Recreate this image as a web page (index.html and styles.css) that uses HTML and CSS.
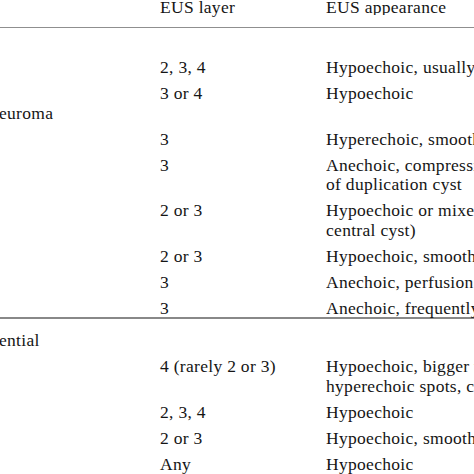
FILE: index.html
```html
<!DOCTYPE html>
<html>
<head>
<meta charset="utf-8">
<link rel="stylesheet" href="styles.css">
</head>
<body>
<div class="tbl">
  <div class="row head"><div class="c1"></div><div class="c2">EUS layer</div><div class="c3">EUS appearance</div></div>
  <div class="rule rule-top"></div>
  <div class="row"><div class="c1">&nbsp;</div><div class="c2"></div><div class="c3"></div></div>
  <div class="row"><div class="c1"></div><div class="c2">2, 3, 4</div><div class="c3">Hypoechoic, usually homogeneous</div></div>
  <div class="row"><div class="c1">&nbsp;<br>euroma</div><div class="c2">3 or 4</div><div class="c3">Hypoechoic</div></div>
  <div class="row"><div class="c1"></div><div class="c2">3</div><div class="c3">Hyperechoic, smooth margins</div></div>
  <div class="row"><div class="c1"></div><div class="c2">3</div><div class="c3">Anechoic, compressible, three to five layers<br>of duplication cyst</div></div>
  <div class="row"><div class="c1"></div><div class="c2">2 or 3</div><div class="c3">Hypoechoic or mixed (may have<br>central cyst)</div></div>
  <div class="row"><div class="c1"></div><div class="c2">2 or 3</div><div class="c3">Hypoechoic, smooth margins</div></div>
  <div class="row"><div class="c1"></div><div class="c2">3</div><div class="c3">Anechoic, perfusion at Doppler</div></div>
  <div class="row last"><div class="c1"></div><div class="c2">3</div><div class="c3">Anechoic, frequently lobulated</div></div>
  <div class="rule rule-mid"></div>
  <div class="row section"><div class="c1">ential</div><div class="c2"></div><div class="c3"></div></div>
  <div class="row"><div class="c1"></div><div class="c2">4 (rarely 2 or 3)</div><div class="c3">Hypoechoic, bigger than 3 cm,<br>hyperechoic spots, cystic areas</div></div>
  <div class="row"><div class="c1"></div><div class="c2">2, 3, 4</div><div class="c3">Hypoechoic</div></div>
  <div class="row"><div class="c1"></div><div class="c2">2 or 3</div><div class="c3">Hypoechoic, smooth margins</div></div>
  <div class="row"><div class="c1"></div><div class="c2">Any</div><div class="c3">Hypoechoic</div></div>
</div>
</body>
</html>
```
FILE: styles.css
```css
html, body {
  margin: 0;
  padding: 0;
  background: #ffffff;
}
body {
  width: 474px;
  height: 474px;
  overflow: hidden;
  font-family: "Liberation Serif", "Times New Roman", serif;
  font-size: 17.5px;
  line-height: 19.5px;
  letter-spacing: 0.3px;
  color: #151515;
}
.tbl {
  width: 474px;
}
.row {
  display: grid;
  grid-template-columns: 160px 166px 148px;
  padding: 3.25px 0;
}
.row.head {
  padding: 0;
  line-height: 15px;
}
.c1 {
  margin-left: -1px;
  white-space: nowrap;
}
.c2 {
  white-space: nowrap;
}
.c3 {
  white-space: nowrap;
  overflow: hidden;
}
.rule {
  height: 1px;
  background: #8f8f8f;
}
.rule-top {
  margin-top: 11.5px;
  margin-bottom: 1.5px;
}
.row.last {
  padding-bottom: 0;
}
.rule-mid {
  margin-top: -1px;
  height: 1.5px;
  margin-bottom: 9px;
  background: #888888;
}
```
